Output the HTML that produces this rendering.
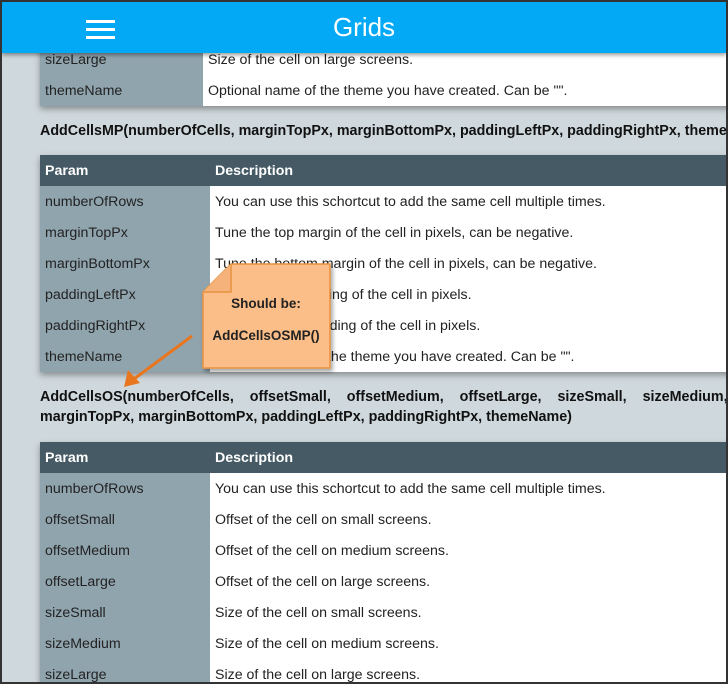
<!DOCTYPE html><html><head><style>
body{margin:0;width:728px;height:684px;overflow:hidden;font-family:"Liberation Sans",sans-serif;}
.frame{position:absolute;left:0;top:0;width:724px;height:680px;border:2px solid #333;background:#CFD8DC;overflow:hidden}
.hdr{position:absolute;left:0;top:0;width:100%;height:51px;background:#03A9F4;box-shadow:0 2px 4px rgba(0,0,0,.4);z-index:5}
.hdr .t{position:absolute;left:0;right:0;top:10px;text-align:center;color:#fff;font-size:26px}
.hb{position:absolute;left:84px;width:29px;height:3px;background:#fff}
table{position:absolute;left:38px;border-collapse:collapse;font-size:14.2px;box-shadow:0 3px 6px rgba(0,0,0,.35);width:700px}
td,th{height:31px;padding:0 0 0 5px;text-align:left;color:#222}
th{background:#455A64;color:#fff;font-weight:bold}
td.p{background:#90A4AE;color:#222}
td.d{background:#fff}
.h{position:absolute;left:38px;font-weight:bold;font-size:14.3px;color:#111;white-space:nowrap}
</style></head><body><div class="frame">
<div class="hdr"><div class="hb" style="top:18px"></div><div class="hb" style="top:26px"></div><div class="hb" style="top:34px"></div><div class="t">Grids</div></div>
<table style="top:42px"><tr><td class="p" style="width:158px">sizeLarge</td><td class="d">Size of the cell on large screens.</td></tr><tr><td class="p">themeName</td><td class="d">Optional name of the theme you have created. Can be "".</td></tr></table>
<div class="h" style="top:121px">AddCellsMP(numberOfCells, marginTopPx, marginBottomPx, paddingLeftPx, paddingRightPx, themeName)</div>
<table style="top:153px"><tr><th style="width:165px">Param</th><th>Description</th></tr>
<tr><td class="p">numberOfRows</td><td class="d">You can use this schortcut to add the same cell multiple times.</td></tr>
<tr><td class="p">marginTopPx</td><td class="d">Tune the top margin of the cell in pixels, can be negative.</td></tr>
<tr><td class="p">marginBottomPx</td><td class="d">Tune the bottom margin of the cell in pixels, can be negative.</td></tr>
<tr><td class="p">paddingLeftPx</td><td class="d">Tune the left padding of the cell in pixels.</td></tr>
<tr><td class="p">paddingRightPx</td><td class="d">Tune the right padding of the cell in pixels.</td></tr>
<tr><td class="p">themeName</td><td class="d">Optional name of the theme you have created. Can be "".</td></tr></table>
<div class="h" style="top:387px;word-spacing:12px">AddCellsOS(numberOfCells, offsetSmall, offsetMedium, offsetLarge, sizeSmall, sizeMedium, sizeLarge,</div>
<div class="h" style="top:407px">marginTopPx, marginBottomPx, paddingLeftPx, paddingRightPx, themeName)</div>
<table style="top:440px"><tr><th style="width:165px">Param</th><th>Description</th></tr>
<tr><td class="p">numberOfRows</td><td class="d">You can use this schortcut to add the same cell multiple times.</td></tr>
<tr><td class="p">offsetSmall</td><td class="d">Offset of the cell on small screens.</td></tr>
<tr><td class="p">offsetMedium</td><td class="d">Offset of the cell on medium screens.</td></tr>
<tr><td class="p">offsetLarge</td><td class="d">Offset of the cell on large screens.</td></tr>
<tr><td class="p">sizeSmall</td><td class="d">Size of the cell on small screens.</td></tr>
<tr><td class="p">sizeMedium</td><td class="d">Size of the cell on medium screens.</td></tr>
<tr><td class="p">sizeLarge</td><td class="d">Size of the cell on large screens.</td></tr></table>
<svg style="position:absolute;left:0;top:0;z-index:4" width="728" height="684">
<defs><filter id="s"><feDropShadow dx="2" dy="3" stdDeviation="2" flood-opacity=".35"/></filter></defs>
<path d="M229,262 H328 V366 H201 V290 Z" fill="#FBBE88" stroke="#E8923F" stroke-width="1.5" filter="url(#s)"/>
<path d="M229,262 V290 H201" fill="#F5B27A" stroke="#E8923F" stroke-width="1.5"/>
<text x="264" y="306" text-anchor="middle" font-family="Liberation Sans" font-weight="bold" font-size="13.5" fill="#222">Should be:</text>
<text x="264" y="338" text-anchor="middle" font-family="Liberation Sans" font-weight="bold" font-size="13.5" fill="#222">AddCellsOSMP()</text>
<line x1="190" y1="334" x2="132" y2="377" stroke="#E8761F" stroke-width="3"/>
<path d="M122,385 L126,368 L138,381 Z" fill="#E8761F"/>
</svg>
</div></body></html>
